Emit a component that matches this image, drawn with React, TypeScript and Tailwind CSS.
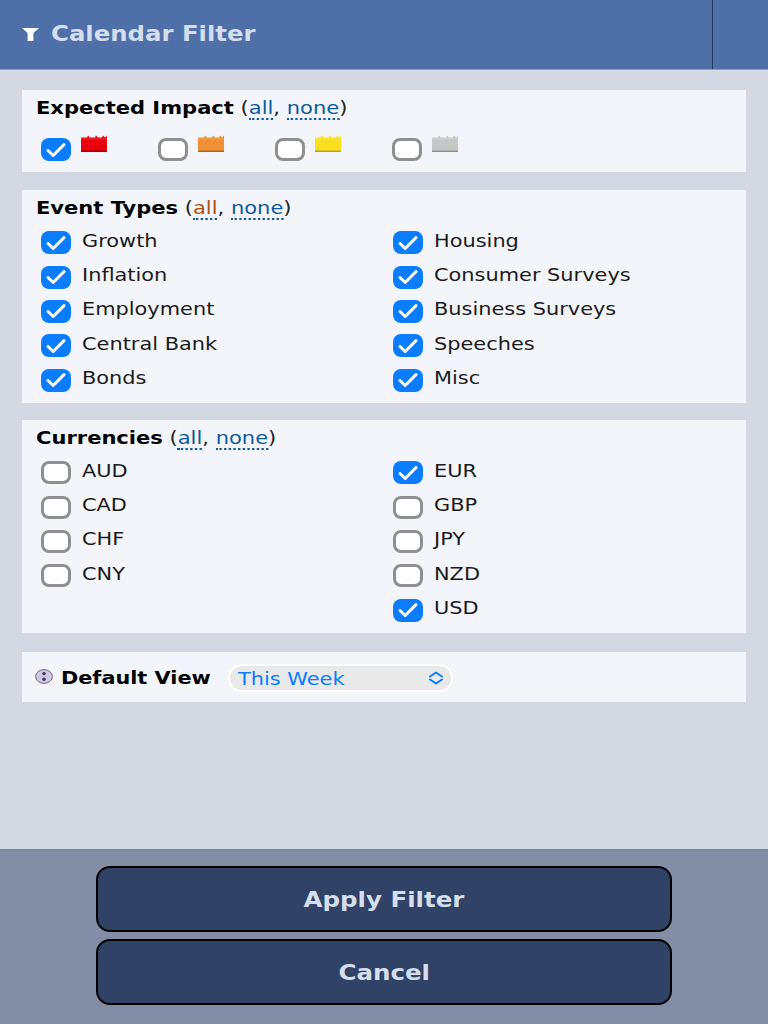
const FONT = "font-['DejaVu_Sans',sans-serif]";

function Check({ on }: { on: boolean }) {
  if (on) {
    return (
      <span className="flex h-[23px] w-[30px] shrink-0 items-center justify-center rounded-[8px] bg-[#0a7cff]">
        <svg width="22" height="16" viewBox="0 0 22 16" fill="none">
          <path d="M3 8.5l5.2 5L19 2.6" stroke="#fff" strokeWidth="3" strokeLinecap="round" strokeLinejoin="round" />
        </svg>
      </span>
    );
  }
  return <span className="h-[23px] w-[30px] shrink-0 rounded-[8px] border-[3px] border-[#8e8e93] bg-white" />;
}

function Lego({ c, d, light }: { c: string; d: string; light: string }) {
  return (
    <svg width="26" height="17" viewBox="0 0 26 17" className="shrink-0">
      <path d="M0 2.5L6 2.5 7 0.5 9 2.5 14 2.5 15 0.5 17 2.5 21 2.5 22 0.5 24 2.5 26 0.5V17H0z" fill={c} />
      <rect x="0" y="15.5" width="26" height="1.5" fill={d} />
      <rect x="0" y="3" width="26" height="1.5" fill={light} opacity="0.5" />
    </svg>
  );
}

function Links({ allColor = "text-[#0e5a9e]" }: { allColor?: string }) {
  return (
    <span className="font-normal text-[#222]">
      {" ("}
      <span className={`border-b-2 border-dotted border-[#0e5a9e] ${allColor}`}>all</span>
      {", "}
      <span className="border-b-2 border-dotted border-[#0e5a9e] text-[#0e5a9e]">none</span>
      {")"}
    </span>
  );
}

function Row({ label, on }: { label?: string; on?: boolean }) {
  if (!label) return <div className="h-[34.4px]" />;
  return (
    <div className="flex h-[34.4px] items-center">
      <span className="ml-[19px] flex"><Check on={!!on} /></span>
      <span className="-mt-[4px] ml-[11px] origin-left scale-x-[1.16] whitespace-nowrap text-[18px] leading-none text-[#1a1a1a]">{label}</span>
    </div>
  );
}

function Grid({ rows }: { rows: [string, boolean, string, boolean][] }) {
  return (
    <div className="grid grid-cols-[352px_1fr]">
      {rows.map(([a, aOn, b, bOn], i) => (
        <div key={i} className="contents">
          <Row label={a} on={aOn} />
          <Row label={b} on={bOn} />
        </div>
      ))}
    </div>
  );
}

function Heading({ children }: { children: React.ReactNode }) {
  return (
    <h2 className="origin-left scale-x-[1.168] whitespace-nowrap text-[18px] leading-[22px] font-bold text-black">
      {children}
    </h2>
  );
}

export default function App() {
  return (
    <div className={`flex h-[1024px] w-[768px] flex-col overflow-hidden bg-[#d4d8e2] ${FONT}`}>
      <header className="flex h-[70px] shrink-0 items-center border-b border-[#8f9db8] bg-[#4f6fa9]">
        <svg width="17" height="13" viewBox="0 0 17 13" className="ml-[22px] shrink-0">
          <path d="M0 0h17l-5.6 5V13H5.6V5z" fill="#fff" />
        </svg>
        <h1 className="ml-[12px] origin-left scale-x-[1.16] whitespace-nowrap text-[21px] font-bold text-[#d5deec]">Calendar Filter</h1>
        <div className="ml-auto mr-[55px] h-full w-px bg-[#24395f]" />
      </header>

      <main className="flex-1 px-[22px] pt-[20px]">
        <section className="h-[82px] bg-[#f3f5fa] pl-[13.5px] pt-[7px]">
          <Heading>
            Expected Impact<Links />
          </Heading>
          <div className="mt-[13px] flex">
            {[
              [true, "#e8000c", "#a80008", "#f63a40"],
              [false, "#ee9033", "#b0681d", "#f5a552"],
              [false, "#f8e01f", "#b8a314", "#fbe94e"],
              [false, "#c6c6c6", "#8f8f8f", "#d8d8d8"],
            ].map(([on, c, d, l], i) => (
              <div key={i} className="flex w-[117px] items-start pl-[5.5px]">
                <span className="mt-[6px] flex"><Check on={on as boolean} /></span>
                <span className="ml-[10px] mt-[3px] flex"><Lego c={c as string} d={d as string} light={l as string} /></span>
              </div>
            ))}
          </div>
        </section>

        <section className="mt-[18px] h-[213px] bg-[#f3f5fa] pt-[7px]">
          <div className="pl-[13.5px]">
            <Heading>
              Event Types<Links allColor="text-[#b0500f]" />
            </Heading>
          </div>
          <div className="mt-[6.5px]">
            <Grid
              rows={[
                ["Growth", true, "Housing", true],
                ["Inflation", true, "Consumer Surveys", true],
                ["Employment", true, "Business Surveys", true],
                ["Central Bank", true, "Speeches", true],
                ["Bonds", true, "Misc", true],
              ]}
            />
          </div>
        </section>

        <section className="mt-[17px] h-[213px] bg-[#f3f5fa] pt-[7px]">
          <div className="pl-[13.5px]">
            <Heading>
              Currencies<Links />
            </Heading>
          </div>
          <div className="mt-[6.5px]">
            <Grid
              rows={[
                ["AUD", false, "EUR", true],
                ["CAD", false, "GBP", false],
                ["CHF", false, "JPY", false],
                ["CNY", false, "NZD", false],
                ["", false, "USD", true],
              ]}
            />
          </div>
        </section>

        <section className="mt-[19px] flex h-[50px] items-center bg-[#f3f5fa] pl-[13px]">
          <svg width="18" height="15" viewBox="0 0 18 15" className="-mt-[2px] shrink-0">
            <ellipse cx="9" cy="7.5" rx="8.4" ry="6.9" fill="#cfc9e0" stroke="#6f6888" />
            <circle cx="9" cy="4.6" r="1.7" fill="#3d3560" />
            <circle cx="9" cy="10.2" r="1.8" fill="#3d3560" />
          </svg>
          <span className="ml-[8px] w-[149px] origin-left scale-x-[1.155] whitespace-nowrap text-[18px] font-bold text-black">Default View</span>
          <div className="ml-[18px] mt-[2px] flex h-[28px] w-[225px] items-center justify-between rounded-full border-2 border-white bg-[#e9e9ea] pl-[8px] pr-[7px]">
            <span className="origin-left scale-x-[1.16] whitespace-nowrap text-[18px] text-[#0a7cff]">This Week</span>
            <svg width="16" height="14" viewBox="0 0 16 14" fill="none" stroke="#0a7cff" strokeWidth="2" strokeLinecap="round" strokeLinejoin="round">
              <path d="M2 5.5L8 1.5l6 4M2 8.5l6 4 6-4" />
            </svg>
          </div>
        </section>
      </main>

      <footer className="flex h-[175px] shrink-0 flex-col items-center gap-[7px] border-t-2 border-[#7a87a3] bg-[#838da6] pt-[15px]">
        <button className="h-[66px] w-[576px] rounded-[14px] border-2 border-black bg-[#304265] pt-[3px] text-[21px] font-bold text-[#d5deec]">
          <span className="inline-block scale-x-[1.167]">Apply Filter</span>
        </button>
        <button className="h-[66px] w-[576px] rounded-[14px] border-2 border-black bg-[#304265] pt-[3px] text-[21px] font-bold text-[#d5deec]">
          <span className="inline-block scale-x-[1.167]">Cancel</span>
        </button>
      </footer>
    </div>
  );
}
